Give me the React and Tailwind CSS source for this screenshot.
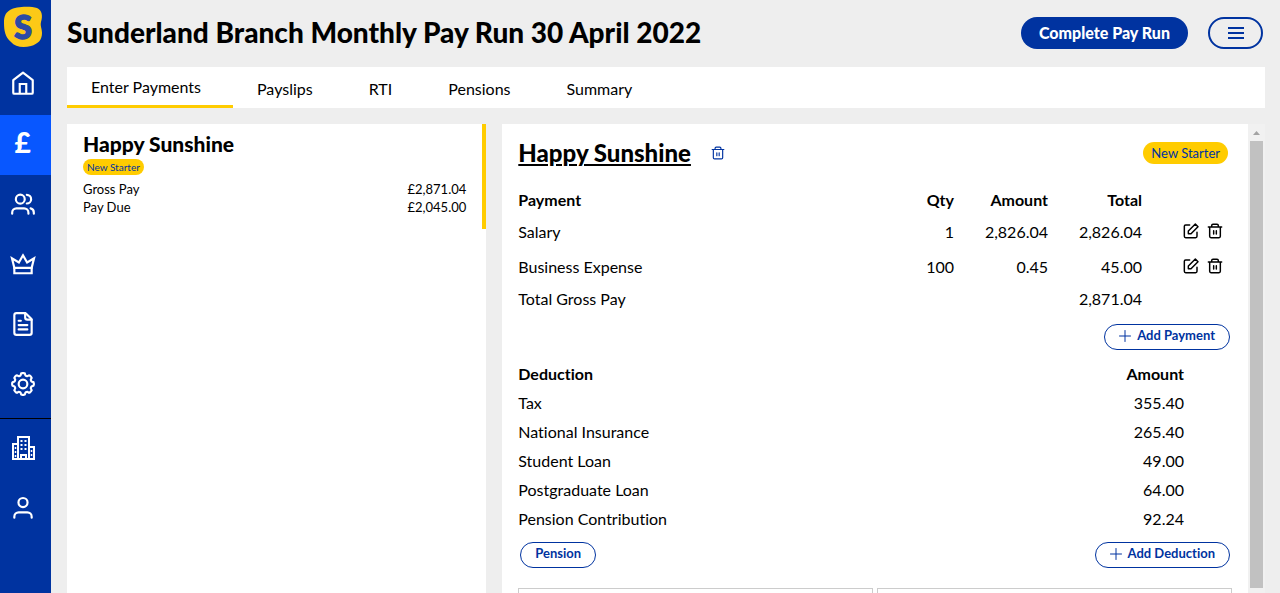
import React, { useState } from 'react';

const tabs = ['Enter Payments', 'Payslips', 'RTI', 'Pensions', 'Summary'];

const payments = [
  { name: 'Salary', qty: '1', amount: '2,826.04', total: '2,826.04' },
  { name: 'Business Expense', qty: '100', amount: '0.45', total: '45.00' },
];

const deductions = [
  { name: 'Tax', amount: '355.40' },
  { name: 'National Insurance', amount: '265.40' },
  { name: 'Student Loan', amount: '49.00' },
  { name: 'Postgraduate Loan', amount: '64.00' },
  { name: 'Pension Contribution', amount: '92.24' },
];

function Icon({ className, width = 2, children }) {
  return (
    <svg
      viewBox="0 0 24 24"
      className={className}
      fill="none"
      stroke="currentColor"
      strokeWidth={width}
      strokeLinecap="round"
      strokeLinejoin="round"
      aria-hidden="true"
    >
      {children}
    </svg>
  );
}

function HomeIcon() {
  return (
    <Icon className="size-[26px]">
      <path d="M3 8.500 12 1.500l9 7v11.500a1 1 0 0 1-1 1H4a1 1 0 0 1-1-1z" />
      <path d="M9 21v-9h6v9" strokeLinecap="butt" strokeLinejoin="miter" />
    </Icon>
  );
}

function PeopleIcon() {
  return (
    <Icon className="size-[26px]">
      <circle cx="9.5" cy="7.5" r="4.1" />
      <path d="M15.5 3.5a4 4 0 0 1 0 8" />
      <path d="M2 21v-1a4 4 0 0 1 4-4h7a4 4 0 0 1 4 4v1" />
      <path d="M19 16c1.8.4 3 2 3 4v1" />
    </Icon>
  );
}

function CrownIcon() {
  return (
    <Icon className="size-[26px]" width={2}>
      <path d="M4 15.500 1.800 6.800l6.400 3.800L12 4l3.800 6.600 6.400-3.800-2.200 8.700z" strokeLinejoin="miter" />
      <path d="M4 15.500v5h16v-5" strokeLinejoin="miter" />
    </Icon>
  );
}

function FileIcon() {
  return (
    <Icon className="size-[26px]">
      <path d="M4 4v16a2 2 0 0 0 2 2h12a2 2 0 0 0 2-2V8.342a2 2 0 0 0-.602-1.43l-4.44-4.342A2 2 0 0 0 13.56 2H6a2 2 0 0 0-2 2z" />
      <path d="M14 2v4a2 2 0 0 0 2 2h4M8 9h2M8 13h8M8 17h8" />
    </Icon>
  );
}

function GearIcon() {
  return (
    <Icon className="size-[26px]">
      <path d="M14 3.269C14 2.568 13.432 2 12.731 2H11.27C10.568 2 10 2.568 10 3.269c0 .578-.396 1.074-.935 1.286-.085.034-.17.07-.253.106-.531.23-1.162.16-1.572-.249a1.27 1.27 0 0 0-1.794 0L4.412 5.446a1.27 1.27 0 0 0 0 1.794c.41.41.48 1.04.248 1.572a7.946 7.946 0 0 0-.105.253c-.212.539-.708.935-1.286.935C2.568 10 2 10.568 2 11.269v1.462C2 13.432 2.568 14 3.269 14c.578 0 1.074.396 1.286.935.034.085.07.17.105.253.231.531.161 1.162-.248 1.572a1.27 1.27 0 0 0 0 1.794l1.034 1.034a1.27 1.27 0 0 0 1.794 0c.41-.41 1.04-.48 1.572-.249.083.037.168.072.253.106.539.212.935.708.935 1.286 0 .701.568 1.269 1.269 1.269h1.462c.701 0 1.269-.568 1.269-1.269 0-.578.396-1.074.935-1.287.085-.033.17-.068.253-.104.531-.232 1.162-.161 1.571.248a1.27 1.27 0 0 0 1.795 0l1.034-1.034a1.27 1.27 0 0 0 0-1.794c-.41-.41-.48-1.04-.249-1.572.037-.083.072-.168.106-.253.212-.539.708-.935 1.286-.935.701 0 1.269-.568 1.269-1.269V11.27c0-.701-.568-1.269-1.269-1.269-.578 0-1.074-.396-1.287-.935a7.755 7.755 0 0 0-.105-.253c-.23-.531-.16-1.162.249-1.572a1.27 1.27 0 0 0 0-1.794l-1.034-1.034a1.27 1.27 0 0 0-1.794 0c-.41.41-1.04.48-1.572.249a7.913 7.913 0 0 0-.253-.106C14.396 4.343 14 3.847 14 3.27z" />
      <circle cx="12" cy="12" r="4" />
    </Icon>
  );
}

function BuildingIcon() {
  return (
    <svg viewBox="0 0 24 24" className="size-6" fill="none" stroke="currentColor" aria-hidden="true">
      <path strokeWidth="2" d="M7 23V1h11v22M7 8H2v15h21V11h-5M10 23v-4h5v4" />
      <path strokeWidth="2" strokeDasharray="2 2" d="M10.5 4v12M14.5 4v12" />
      <path strokeWidth="1.5" strokeDasharray="2 2" d="M4.5 11v10M20.5 14v8" />
    </svg>
  );
}

function PersonIcon() {
  return (
    <Icon className="size-[26px]">
      <circle cx="12" cy="7" r="4.2" />
      <path d="M4 21v-1a4 4 0 0 1 4-4h8a4 4 0 0 1 4 4v1" />
    </Icon>
  );
}

function TrashIcon({ className, width }) {
  return (
    <Icon className={className} width={width}>
      <path d="M4 6v14a2 2 0 0 0 2 2h12a2 2 0 0 0 2-2V6M2 6h20M7 6V4a2 2 0 0 1 2-2h6a2 2 0 0 1 2 2v2M10 11.5v5M14 11.5v5" />
    </Icon>
  );
}

function EditIcon() {
  return (
    <Icon className="size-4" width={2.2}>
      <path d="M10 3H4a2 2 0 0 0-2 2v15a2 2 0 0 0 2 2h15a2 2 0 0 0 2-2v-6" />
      <path d="M8 16v-4L18.5 1.5l4 4L12 16z" />
    </Icon>
  );
}

function Logo() {
  return (
    <svg viewBox="0 0 40 44" className="h-11 w-10" role="img" aria-label="S">
      <path
        fill="#fcc917"
        d="M7 4C13 0 28 0 34 2c5 2 6 8 4 14-1 4 1 6 1 11 0 7-4 11-11 13-8 2-16 1-20-4C2 31 1 24 1 17 1 11 2 7 7 4z"
      />
      <text
        x="20"
        y="33"
        textAnchor="middle"
        fill="#2c4aa5"
        stroke="#2c4aa5"
        strokeWidth="1.5"
        fontSize="32"
        fontWeight="900"
        fontFamily="Lato, sans-serif"
      >
        S
      </text>
    </svg>
  );
}

const mainNav = [
  { label: 'Home', icon: <HomeIcon /> },
  { label: 'Payroll', icon: <span className="pb-1 text-[28px] font-black">£</span>, active: true },
  { label: 'People', icon: <PeopleIcon /> },
  { label: 'Directors', icon: <CrownIcon /> },
  { label: 'Reports', icon: <FileIcon /> },
  { label: 'Settings', icon: <GearIcon /> },
];

const accountNav = [
  { label: 'Company', icon: <BuildingIcon /> },
  { label: 'Account', icon: <PersonIcon /> },
];

function NavItem({ label, icon, active }) {
  return (
    <a
      href="#"
      aria-label={label}
      className={`flex h-[60px] items-center justify-center pr-1.5 pb-0.5 ${active ? 'bg-[#0857ff]' : ''}`}
    >
      {icon}
    </a>
  );
}

function SmallButton({ plus, children }) {
  return (
    <button
      type="button"
      className="flex h-[26px] items-center gap-1.5 rounded-full border border-[#0033a0] px-3.5 pb-0.5 text-[13px] font-bold text-[#0033a0]"
    >
      {plus && (
        <Icon className="size-3" width={2}>
          <path d="M12 1v22M1 12h22" />
        </Icon>
      )}
      {children}
    </button>
  );
}

export default function App() {
  const [tab, setTab] = useState('Enter Payments');

  return (
    <div className="flex h-screen overflow-hidden bg-[#eeeeee] font-['Lato',sans-serif] text-base text-black [font-variant-ligatures:none]">
      <aside className="w-[51px] shrink-0 bg-[#0033a0] text-white">
        <div className="flex h-[55px] items-center pl-[3px]">
          <Logo />
        </div>
        <nav>
          {mainNav.map((item) => (
            <NavItem key={item.label} {...item} />
          ))}
          <div className="mt-[3px] border-t border-black">
            {accountNav.map((item) => (
              <NavItem key={item.label} {...item} />
            ))}
          </div>
        </nav>
      </aside>

      <main className="flex min-w-0 flex-1 flex-col pr-[15px] pl-4">
        <header className="flex h-[67px] shrink-0 items-center justify-between pb-0.5">
          <h1 className="pb-0.5 text-[28px] font-black">Sunderland Branch Monthly Pay Run 30 April 2022</h1>
          <div className="flex gap-5 pr-0.5">
            <button type="button" className="h-8 rounded-full bg-[#0033a0] px-[18px] font-black text-white">
              Complete Pay Run
            </button>
            <button
              type="button"
              aria-label="Menu"
              className="flex h-8 w-[55px] items-center justify-center rounded-full border-2 border-[#0033a0] text-[#0033a0]"
            >
              <svg viewBox="0 0 16 12" className="h-3 w-4" stroke="currentColor" strokeWidth="2" aria-hidden="true">
                <path d="M0 1h16M0 6h16M0 11h16" />
              </svg>
            </button>
          </div>
        </header>

        <div className="flex h-[41px] shrink-0 bg-white" role="tablist">
          {tabs.map((t) => (
            <button
              key={t}
              type="button"
              role="tab"
              aria-selected={t === tab}
              onClick={() => setTab(t)}
              className={`pt-0.5 pr-8 pl-6 ${t === tab ? 'border-b-[3px] border-[#ffcc00]' : ''}`}
            >
              {t}
            </button>
          ))}
        </div>

        <div className="flex min-h-0 flex-1 gap-4 pt-4">
          <section className="w-[35%] shrink-0 bg-white">
            <div className="border-r-4 border-[#ffcc00] px-4 pt-2 pb-[13px]">
              <h2 className="text-[21px] leading-6 font-black">Happy Sunshine</h2>
              <div className="mt-[3px] mb-[5px] flex">
                <span className="rounded-full bg-[#ffcc00] px-1 text-[10px] leading-4 text-[#0033a0]">New Starter</span>
              </div>
              <dl className="text-[13px] leading-[18px]">
                <div className="flex justify-between">
                  <dt>Gross Pay</dt>
                  <dd>£2,871.04</dd>
                </div>
                <div className="flex justify-between">
                  <dt>Pay Due</dt>
                  <dd>£2,045.00</dd>
                </div>
              </dl>
            </div>
          </section>

          <section className="flex min-w-0 flex-1 overflow-hidden bg-white">
            <div className="flex min-w-0 flex-1 flex-col px-4 pt-[15px]">
              <div className="flex h-7 shrink-0 items-center justify-between pr-1">
                <div className="flex items-center gap-5">
                  <h2 className="text-2xl leading-7 font-black underline decoration-2 underline-offset-2">Happy Sunshine</h2>
                  <button type="button" aria-label="Delete employee" className="text-[#0033a0]">
                    <TrashIcon className="size-3.5" width={2} />
                  </button>
                </div>
                <span className="rounded-full bg-[#ffcc00] px-2 text-[13px] leading-[22px] text-[#0033a0]">New Starter</span>
              </div>

              <table className="mt-[18px] w-full shrink-0 table-fixed text-right">
                <thead>
                  <tr className="h-[29px]">
                    <th className="text-left font-bold">Payment</th>
                    <th className="w-[94px] font-bold">Qty</th>
                    <th className="w-[94px] font-bold">Amount</th>
                    <th className="w-[94px] font-bold">Total</th>
                    <th className="w-[90px]" aria-label="Actions" />
                  </tr>
                </thead>
                <tbody>
                  {payments.map((p) => (
                    <tr key={p.name} className="h-[35px]">
                      <td className="text-left">{p.name}</td>
                      <td>{p.qty}</td>
                      <td>{p.amount}</td>
                      <td>{p.total}</td>
                      <td>
                        <div className="flex justify-end gap-2 pr-[9px] pb-0.5">
                          <button type="button" aria-label={`Edit ${p.name}`}>
                            <EditIcon />
                          </button>
                          <button type="button" aria-label={`Delete ${p.name}`}>
                            <TrashIcon className="size-4" width={2.2} />
                          </button>
                        </div>
                      </td>
                    </tr>
                  ))}
                  <tr className="h-[29px]">
                    <td className="text-left">Total Gross Pay</td>
                    <td />
                    <td />
                    <td>2,871.04</td>
                    <td />
                  </tr>
                </tbody>
              </table>

              <div className="mt-[11px] flex justify-end pr-0.5">
                <SmallButton plus>Add Payment</SmallButton>
              </div>

              <table className="mt-[9px] w-full shrink-0 text-right">
                <thead>
                  <tr className="h-[29px]">
                    <th className="text-left font-bold">Deduction</th>
                    <th className="pr-12 font-bold">Amount</th>
                  </tr>
                </thead>
                <tbody>
                  {deductions.map((d) => (
                    <tr key={d.name} className="h-[29px]">
                      <td className="text-left">{d.name}</td>
                      <td className="pr-12">{d.amount}</td>
                    </tr>
                  ))}
                </tbody>
              </table>

              <div className="mt-[9px] flex justify-between px-0.5">
                <SmallButton>Pension</SmallButton>
                <SmallButton plus>Add Deduction</SmallButton>
              </div>

              <div className="mt-5 grid flex-1 grid-cols-2 gap-1">
                <div className="border border-b-0 border-[#cccccc]" />
                <div className="border border-b-0 border-[#cccccc]" />
              </div>
            </div>

            <div className="flex w-[17px] shrink-0 flex-col bg-[#f1f1f1] px-0.5 pb-[5px]" aria-hidden="true">
              <svg viewBox="0 0 13 17" className="h-[17px] w-[13px]" fill="#a3a3a3">
                <path d="M3 11l3.5-4 3.5 4z" />
              </svg>
              <div className="flex-1 bg-[#c1c1c1]" />
            </div>
          </section>
        </div>
      </main>
    </div>
  );
}
